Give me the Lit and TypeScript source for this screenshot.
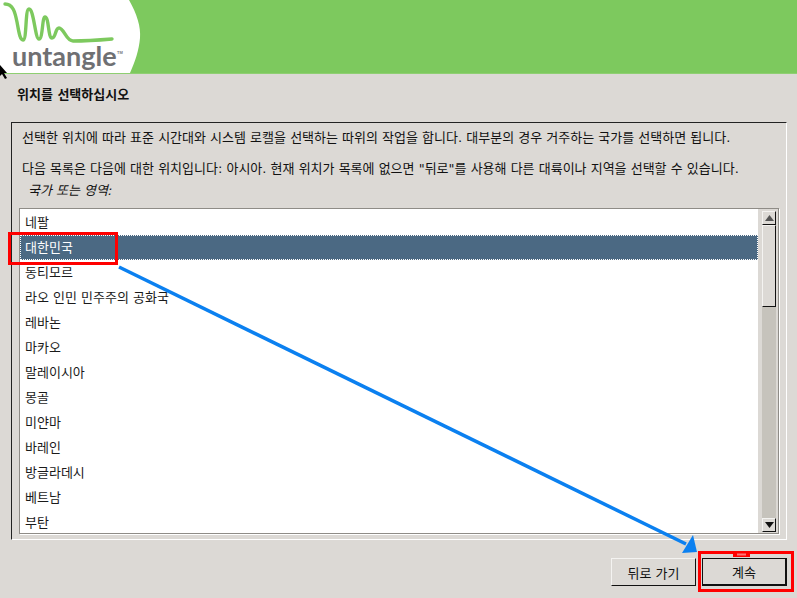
import { LitElement, html, css, svg } from "lit";
import { customElement } from "lit/decorators.js";

const ROWS = ["네팔","대한민국","동티모르","라오 인민 민주주의 공화국","레바논","마카오","말레이시아","몽골","미얀마","바레인","방글라데시","베트남","부탄"];

@customElement("app-root")
export class AppRoot extends LitElement {
  static styles = css`
    :host { display: block; position: relative; width: 797px; height: 598px; overflow: hidden; background: #dcd9d5; font-family: "DejaVu Sans", "Noto Sans CJK KR", sans-serif; font-size: 13px; color: #111; }
    .header { position: relative; height: 73px; background: #7dc95e; border-bottom: 1px solid #8fcf72; overflow: hidden; }
    .logo-bg { position: absolute; left: 0; top: 0; }
    .logo-text { position: absolute; left: 12px; top: 39px; font: 700 27px/34px Lato, sans-serif; color: #6f7073; }
    .tm { position: absolute; left: 117px; top: 50px; font: 700 4px/5px "Liberation Sans", sans-serif; color: #77787b; }
    .title { height: 48px; padding: 13px 0 0 17px; box-sizing: border-box; font-weight: 700; line-height: 16px; }
    .panel { margin-left: 11px; width: 776px; height: 418px; box-sizing: border-box; border: 1px solid; border-color: #222 #fff #fff #222; display: flex; flex-direction: column; padding: 0 7px 0 7px; }
    .p { margin: 0 0 0 3px; line-height: 16px; white-space: pre; }
    .p1 { margin-top: 7px; }
    .p2 { margin-top: 15px; }
    .lbl { margin: 6px 0 0 9px; font-style: italic; line-height: 16px; }
    .listwrap { margin-top: 9px; height: 326px; width: 760px; box-sizing: border-box; border: 1px solid #8f8c87; box-shadow: 1px 1px 0 #fff; display: flex; background: #fff; }
    .list { flex: 1; padding-top: 1px; overflow: hidden; }
    .row { height: 25px; box-sizing: border-box; line-height: 25px; padding-left: 5px; color: #1a1a1a; }
    .row.sel { background: #4b6983; color: #fff; outline: 1px dotted #fff; outline-offset: -1px; }
    .sb { width: 14px; padding: 2px 2px 1px 4px; background: #dcd9d5; display: flex; flex-direction: column; }
    .btn-s { height: 14px; flex: none; box-sizing: border-box; background: #dcd9d5; border: 1px solid; border-color: #f4f3f1 #111 #111 #f4f3f1; display: flex; align-items: center; justify-content: center; }
    .thumb { height: 82px; flex: none; box-sizing: border-box; background: #dcd9d5; border: 1px solid; border-color: #f4f3f1 #111 #111 #f4f3f1; }
    .track { flex: 1; background: #c6c3bc; }
    .footer { display: flex; justify-content: flex-end; gap: 6px; padding: 18px 10px 0 0; }
    .btn { height: 28px; box-sizing: border-box; background: #dcd9d5; border: 1px solid; border-color: #f4f3f1 #111 #111 #f4f3f1; display: flex; align-items: center; justify-content: center; }
    .b1 { width: 85px; }
    .b2 { width: 85px; border: 2px solid #111; border-top-width: 1px; border-left-width: 1px; }
    .overlay { position: absolute; left: 0; top: 0; pointer-events: none; }
  `;

  render() {
    return html`
      <div class="header">
        <svg class="logo-bg" width="142" height="73" viewBox="0 0 142 73">
          <path d="M0 0H129C137 14 141 27 140 38C139 50 135 62 130 73H0Z" fill="#fff"/>
          <path d="M5 4C13 4 15 12 17 22C19 33 20 40 23 40C27 40 25 9 29 9C34 9 35 39 39 39C43 39 42 17 45 17C49 17 48 38 52 38C56 38 55 28 59 28C64 28 66 41 73 41C85 41 100 40 112 39" fill="none" stroke="#7dc95e" stroke-width="3.4" stroke-linecap="round" stroke-linejoin="round"/>
        </svg>
        <span class="logo-text">untangle</span><span class="tm">TM</span>
      </div>
      <div class="title">위치를 선택하십시오</div>
      <div class="panel">
        <p class="p p1">선택한 위치에 따라 표준 시간대와 시스템 로캘을 선택하는 따위의 작업을 합니다. 대부분의 경우 거주하는 국가를 선택하면 됩니다.</p>
        <p class="p p2">다음 목록은 다음에 대한 위치입니다: 아시아. 현재 위치가 목록에 없으면 "뒤로"를 사용해 다른 대륙이나 지역을 선택할 수 있습니다.</p>
        <div class="lbl">국가 또는 영역:</div>
        <div class="listwrap">
          <div class="list">
            ${ROWS.map((r, i) => html`<div class="row ${i === 1 ? "sel" : ""}">${r}</div>`)}
          </div>
          <div class="sb">
            <div class="btn-s"><svg width="9" height="6"><path d="M4.5 0L9 6H0Z" fill="#555"/></svg></div>
            <div class="thumb"></div>
            <div class="track"></div>
            <div class="btn-s"><svg width="9" height="6"><path d="M0 0H9L4.5 6Z" fill="#111"/></svg></div>
          </div>
        </div>
      </div>
      <div class="footer">
        <div class="btn b1">뒤로 가기</div>
        <div class="btn b2">계속</div>
      </div>
      <svg class="overlay" width="797" height="598" viewBox="0 0 797 598">
        ${svg`
          <rect x="9.5" y="233.5" width="107" height="30" fill="none" stroke="#f00" stroke-width="3"/>
          <rect x="699.5" y="552.5" width="93" height="38" fill="none" stroke="#f00" stroke-width="3"/>
          <rect x="733" y="552" width="17" height="5" fill="#f00"/>
          <rect x="737" y="553.5" width="9" height="2" fill="#f77"/>
          <line x1="119" y1="267" x2="686" y2="544" stroke="#0b80f0" stroke-width="3.5"/>
          <path d="M682 553L697 552L693 535Z" fill="#0b80f0"/>
          <path d="M0 65L0 76L2 74L5 79L7 78L4 73H7Z" fill="#000"/>
        `}
      </svg>
    `;
  }
}
